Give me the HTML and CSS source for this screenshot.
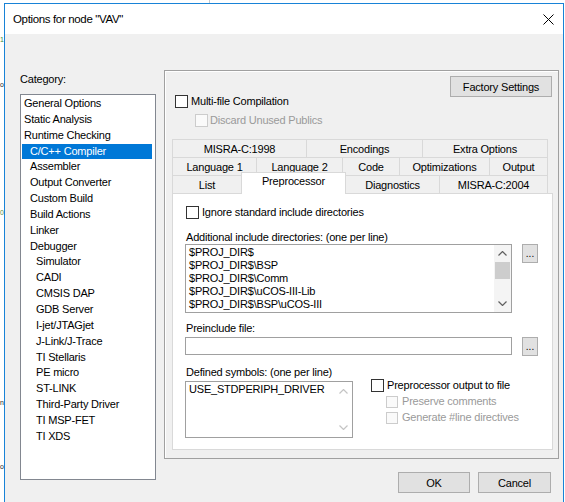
FILE: index.html
```html
<!DOCTYPE html>
<html>
<head>
<meta charset="utf-8">
<title>Options for node "VAV"</title>
<link rel="stylesheet" href="styles.css">
</head>
<body>
<div class="desktop">
  <div class="bgline"></div>
  <span class="bgfrag frag-1">1</span>
  <span class="bgfrag frag-2">o</span>
  <span class="bgfrag frag-3">0</span>
  <span class="bgfrag frag-4">n</span>
  <span class="bgfrag frag-5">o</span>

  <div class="dialog">
    <div class="titlebar">
      <span class="title">Options for node "VAV"</span>
      <svg class="close" width="11" height="11" viewBox="0 0 11 11"><path d="M0.5 0.5 L10.5 10.5 M10.5 0.5 L0.5 10.5" stroke="#000" stroke-width="1" fill="none"/></svg>
    </div>

    <div class="body">
      <div class="leftcol">
        <div class="cat-label">Category:</div>
        <ul class="catlist">
          <li class="l0">General Options</li>
          <li class="l0">Static Analysis</li>
          <li class="l0">Runtime Checking</li>
          <li class="l1 sel">C/C++ Compiler</li>
          <li class="l1">Assembler</li>
          <li class="l1">Output Converter</li>
          <li class="l1">Custom Build</li>
          <li class="l1">Build Actions</li>
          <li class="l1">Linker</li>
          <li class="l1">Debugger</li>
          <li class="l2">Simulator</li>
          <li class="l2">CADI</li>
          <li class="l2">CMSIS DAP</li>
          <li class="l2">GDB Server</li>
          <li class="l2">I-jet/JTAGjet</li>
          <li class="l2">J-Link/J-Trace</li>
          <li class="l2">TI Stellaris</li>
          <li class="l2">PE micro</li>
          <li class="l2">ST-LINK</li>
          <li class="l2">Third-Party Driver</li>
          <li class="l2">TI MSP-FET</li>
          <li class="l2">TI XDS</li>
        </ul>
      </div>

      <div class="panel">
        <div class="panel-top">
          <div class="top-checks">
            <div class="chk-row"><span class="cb"></span><span class="cb-label">Multi-file Compilation</span></div>
            <div class="chk-row sub disabled"><span class="cb"></span><span class="cb-label">Discard Unused Publics</span></div>
          </div>
          <div class="btn factory">Factory Settings</div>
        </div>

        <div class="tabs">
          <div class="tabrow">
            <div class="tab first w135">MISRA-C:1998</div>
            <div class="tab w116">Encodings</div>
            <div class="tab w125">Extra Options</div>
          </div>
          <div class="tabrow">
            <div class="tab first w85">Language 1</div>
            <div class="tab w86">Language 2</div>
            <div class="tab w57">Code</div>
            <div class="tab w90">Optimizations</div>
            <div class="tab w58">Output</div>
          </div>
          <div class="tabrow">
            <div class="tab first w70">List</div>
            <div class="tab active w104">Preprocessor</div>
            <div class="tab w94">Diagnostics</div>
            <div class="tab w108">MISRA-C:2004</div>
          </div>
        </div>

        <div class="tab-content">
          <div class="chk-row ignore"><span class="cb"></span><span class="cb-label">Ignore standard include directories</span></div>

          <div class="field-label lbl-inc">Additional include directories: (one per line)</div>
          <div class="field-row">
            <div class="listbox inc">
              <div class="lines">
                <div>$PROJ_DIR$</div>
                <div>$PROJ_DIR$\BSP</div>
                <div>$PROJ_DIR$\Comm</div>
                <div>$PROJ_DIR$\uCOS-III-Lib</div>
                <div>$PROJ_DIR$\BSP\uCOS-III</div>
              </div>
              <div class="vscroll">
                <div class="arrow"><svg width="9" height="5" viewBox="0 0 9 5"><path d="M0.5 4.5 L4.5 0.5 L8.5 4.5" stroke="#606060" stroke-width="1.2" fill="none"/></svg></div>
                <div class="thumb"></div>
                <div class="track"></div>
                <div class="arrow"><svg width="9" height="5" viewBox="0 0 9 5"><path d="M0.5 0.5 L4.5 4.5 L8.5 0.5" stroke="#606060" stroke-width="1.2" fill="none"/></svg></div>
              </div>
            </div>
            <div class="btn dots">...</div>
          </div>

          <div class="field-label lbl-pre">Preinclude file:</div>
          <div class="field-row">
            <div class="textbox"></div>
            <div class="btn dots">...</div>
          </div>

          <div class="field-label lbl-def">Defined symbols: (one per line)</div>
          <div class="bottom-row">
            <div class="listbox defs">
              <div class="lines"><div>USE_STDPERIPH_DRIVER</div></div>
              <div class="vscroll off">
                <div class="arrow"><svg width="9" height="5" viewBox="0 0 9 5"><path d="M0.5 4.5 L4.5 0.5 L8.5 4.5" stroke="#c4c4c4" stroke-width="1.2" fill="none"/></svg></div>
                <div class="track"></div>
                <div class="arrow"><svg width="9" height="5" viewBox="0 0 9 5"><path d="M0.5 0.5 L4.5 4.5 L8.5 0.5" stroke="#c4c4c4" stroke-width="1.2" fill="none"/></svg></div>
              </div>
            </div>
            <div class="pp-group">
              <div class="chk-row"><span class="cb"></span><span class="cb-label">Preprocessor output to file</span></div>
              <div class="chk-row sub2 disabled"><span class="cb"></span><span class="cb-label">Preserve comments</span></div>
              <div class="chk-row sub2 disabled"><span class="cb"></span><span class="cb-label">Generate #line directives</span></div>
            </div>
          </div>
        </div>
      </div>

      <div class="actions">
        <div class="btn ok">OK</div>
        <div class="btn cancel">Cancel</div>
      </div>
    </div>
  </div>
</div>
</body>
</html>
```

FILE: styles.css
```css
* { box-sizing: border-box; }
html, body { margin: 0; padding: 0; }
body {
  width: 565px;
  height: 502px;
  overflow: hidden;
  background: #ffffff;
  font-family: "Liberation Sans", Arial, sans-serif;
  font-size: 11px;
  letter-spacing: -0.2px;
  color: #000;
}
.desktop { position: relative; width: 565px; height: 502px; overflow: hidden; }
.bgline { position: absolute; left: 209px; top: 0; width: 1px; height: 3px; background: #c8c8c8; }
.bgfrag { position: absolute; left: 0; font-size: 7px; line-height: 8px; letter-spacing: 0; color: #222; }
.frag-1 { top: 36px; color: #3a8a3a; }
.frag-2 { top: 81px; }
.frag-3 { top: 209px; color: #5a8a3a; }
.frag-4 { top: 399px; }
.frag-5 { top: 463px; }

.dialog {
  position: absolute;
  z-index: 5;
  left: 4px;
  top: 3px;
  width: 560px;
  height: 512px;
  border: 1px solid #1883d7;
  background: #f0f0f0;
  display: flex;
  flex-direction: column;
}
.titlebar {
  height: 30px;
  background: #fff;
  display: flex;
  align-items: center;
  justify-content: space-between;
  padding: 0 9px 0 8px;
}
.title { font-size: 11.5px; letter-spacing: -0.35px; }
.close { display: block; }

.body {
  display: grid;
  grid-template-columns: 136px 395px;
  grid-template-rows: auto auto;
  column-gap: 8px;
  padding: 36px 4px 0 15px;
}
.leftcol { grid-row: 1 / span 2; }
.cat-label { margin-top: 2px; height: 14px; line-height: 14px; }
.catlist {
  list-style: none;
  margin: 8px 0 0 0;
  padding: 1px 0 0 0;
  height: 386px;
  background: #fff;
  border: 1px solid #828790;
}
.catlist li { height: 15.85px; line-height: 15.85px; white-space: nowrap; }
.catlist .l0 { padding-left: 3px; }
.catlist .l1 { padding-left: 9px; }
.catlist .l2 { padding-left: 15px; }
.catlist .sel { background: #0078d7; color: #fff; margin-left: 1px; width: 130px; padding-left: 8px; }

.panel {
  height: 389px;
  border: 1px solid #a0a0a0;
  box-shadow: inset 1px 1px 0 #fff;
  display: flex;
  flex-direction: column;
}
.panel-top { display: grid; grid-template-columns: 1fr auto; }
.top-checks { padding: 24px 0 0 10px; }
.chk-row { display: flex; align-items: center; height: 13px; white-space: nowrap; }
.cb { width: 13px; height: 13px; border: 1px solid #333; background: #fff; flex: none; }
.cb-label { margin-left: 3px; line-height: 13px; }
.disabled .cb { border-color: #cccccc; background: #fafafa; }
.disabled .cb-label { color: #9a9a9a; }
.chk-row.sub { margin-top: 6px; padding-left: 20px; }
.chk-row.sub .cb-label { margin-left: 2px; }

.btn {
  background: #e1e1e1;
  border: 1px solid #adadad;
  display: flex;
  align-items: center;
  justify-content: center;
  white-space: nowrap;
}
.factory { margin: 5px 6px 0 0; width: 102px; height: 21px; }

.tabs { margin: 12px 0 0 7px; width: 376px; }
.tabrow { display: flex; height: 18px; }
.tab {
  height: 18px;
  border-top: 1px solid #d9d9d9;
  border-right: 1px solid #d9d9d9;
  background: #f0f0f0;
  display: flex;
  align-items: center;
  justify-content: center;
  white-space: nowrap;
}
.tab.first { border-left: 1px solid #d9d9d9; }
.tab.active {
  position: relative;
  z-index: 2;
  background: #fff;
  margin-top: -3px;
  margin-left: -1px;
  height: 22px;
  border-left: 1px solid #d9d9d9;
  align-items: flex-start;
  padding-top: 2px;
}
.w135 { width: 135px; } .w116 { width: 116px; } .w125 { width: 125px; }
.w85 { width: 85px; } .w86 { width: 86px; } .w57 { width: 57px; } .w90 { width: 90px; } .w58 { width: 58px; }
.w70 { width: 70px; } .w104 { width: 105px; } .w94 { width: 94px; } .w108 { width: 108px; }

.tab-content {
  position: relative;
  z-index: 1;
  margin-left: 7px;
  width: 381px;
  height: 257px;
  background: #fff;
  border: 1px solid #d9d9d9;
}
.chk-row.ignore { margin-top: 12px; padding-left: 13px; }
.field-label { padding-left: 13px; height: 14px; line-height: 14px; white-space: nowrap; }
.lbl-inc { margin-top: 11px; }
.lbl-pre { margin-top: 8px; }
.lbl-def { margin-top: 9px; }
.field-row { display: flex; align-items: flex-start; padding-left: 12px; margin-top: 0; }
.lbl-pre + .field-row { margin-top: 2px; }
.listbox { border: 1px solid #a0a0a0; background: #fff; display: flex; }
.listbox.inc { width: 327px; height: 69px; }
.lines { flex: 1; padding: 1px 0 0 3px; line-height: 13px; white-space: nowrap; }
.vscroll { width: 17px; display: flex; flex-direction: column; background: #f4f4f4; }
.vscroll.off { background: #fff; }
.vscroll .arrow { height: 17px; display: flex; align-items: center; justify-content: center; flex: none; }
.vscroll .thumb { height: 17px; margin: 0 1px; background: #cdcdcd; flex: none; }
.vscroll .track { flex: 1; }
.dots { margin-left: 10px; width: 16px; height: 19px; align-items: flex-end; padding-bottom: 4px; font-size: 10px; letter-spacing: 0; line-height: 8px; }
.textbox { width: 327px; height: 18px; border: 1px solid #a0a0a0; background: #fff; }

.bottom-row { display: flex; align-items: flex-start; padding-left: 12px; margin-top: 2px; }
.listbox.defs { width: 168px; height: 57px; }
.listbox.defs .vscroll .arrow { height: 19px; }
.pp-group { margin: -2px 0 0 18px; }
.chk-row.sub2 { margin-top: 3px; padding-left: 15px; }
.chk-row.sub2 .cb { width: 12px; height: 12px; }
.chk-row.sub2 .cb-label { margin-left: 4px; }

.actions {
  grid-column: 2;
  display: flex;
  justify-content: flex-end;
  gap: 8px;
  margin-top: 13px;
  padding-right: 8px;
}
.ok { width: 72px; height: 21px; }
.cancel { width: 73px; height: 21px; }
```
